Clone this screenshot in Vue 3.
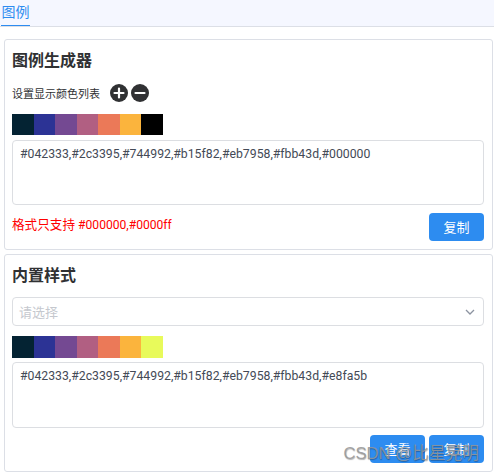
<script setup>
const paletteA = ['#042333', '#2c3395', '#744992', '#b15f82', '#eb7958', '#fbb43d', '#000000']
const paletteB = ['#042333', '#2c3395', '#744992', '#b15f82', '#eb7958', '#fbb43d', '#e8fa5b']
</script>

<template>
  <div class="page">
    <div class="tabs"><div class="tab">图例</div></div>

    <section class="card first">
      <h2 class="title">图例生成器</h2>
      <div class="setting">
        <span class="setting-label">设置显示颜色列表</span>
        <div class="icons">
          <svg class="round" viewBox="0 0 18 18"><circle cx="9" cy="9" r="9" fill="#303133"/><path d="M9 4.5v9M4.5 9h9" stroke="#fff" stroke-width="2.2" stroke-linecap="round"/></svg>
          <svg class="round" viewBox="0 0 18 18"><circle cx="9" cy="9" r="9" fill="#303133"/><path d="M4.5 9h9" stroke="#fff" stroke-width="2.2" stroke-linecap="round"/></svg>
        </div>
      </div>
      <div class="swatches short"><i v-for="c in paletteA" :key="c" :style="{ background: c }"></i></div>
      <div class="area">#042333,#2c3395,#744992,#b15f82,#eb7958,#fbb43d,#000000</div>
      <div class="foot between">
        <span class="hint">格式只支持 <span class="hint-code">#000000,#0000ff</span></span>
        <button class="btn">复制</button>
      </div>
    </section>

    <section class="card second">
      <h2 class="title">内置样式</h2>
      <div class="select">
        <span>请选择</span>
        <svg class="chev" viewBox="0 0 10 6"><path d="M1 1l4 4 4-4" fill="none" stroke="#8c93a0" stroke-width="1.3"/></svg>
      </div>
      <div class="swatches"><i v-for="c in paletteB" :key="c" :style="{ background: c }"></i></div>
      <div class="area tall">#042333,#2c3395,#744992,#b15f82,#eb7958,#fbb43d,#e8fa5b</div>
      <div class="foot end">
        <button class="btn">查看</button>
        <button class="btn">复制</button>
      </div>
    </section>

    <div class="mark">CSDN @比星晃明</div>
  </div>
</template>

<style scoped>
.page {
  position: relative;
  width: 494px;
  height: 472px;
  overflow: hidden;
  background: #fff;
  font-family: Roboto, "Noto Sans CJK SC", sans-serif;
  color: #303133;
}
.tabs {
  height: 26px;
  background: #f5f7ff;
  border-bottom: 1px solid #dcdfe6;
  padding-left: 1px;
}
.tab {
  width: 29px;
  height: 26px;
  line-height: 25px;
  box-sizing: border-box;
  font-size: 14px;
  text-align: center;
  color: #2d8cf0;
  border-bottom: 1px solid #2d8cf0;
}
.card {
  box-sizing: border-box;
  margin-left: 4px;
  width: 489px;
  border: 1px solid #dcdfe6;
  border-radius: 3px;
  padding: 0 8px 0 7px;
}
.first { margin-top: 12px; height: 211px; }
.second { margin-top: 4px; height: 218px; }
.title {
  margin: 0;
  font-size: 16px;
  font-weight: 600;
  line-height: 22px;
  padding-top: 10px;
}
.setting {
  display: flex;
  align-items: center;
  height: 18px;
  margin-top: 12px;
}
.setting-label { font-size: 11px; width: 98px; }
.icons { display: flex; gap: 3px; }
.round { width: 18px; height: 18px; display: block; }
.swatches { display: flex; width: 151px; height: 22px; margin-top: 10px; }
.swatches.short { height: 21px; margin-top: 12px; }
.swatches i { flex: 1; display: block; }
.area {
  box-sizing: border-box;
  height: 65px;
  margin-top: 5px;
  border: 1px solid #dcdee2;
  border-radius: 4px;
  padding: 5px 7px;
  font-size: 12.25px;
  line-height: 17px;
  color: #444a56;
}
.area.tall { height: 66px; margin-top: 4px; }
.foot { display: flex; align-items: center; margin-top: 8px; gap: 4px; }
.between { justify-content: space-between; }
.end { justify-content: flex-end; margin-top: 7px; }
.hint { font-size: 12.6px; color: #f00; position: relative; top: -4px; }
.hint-code { font-size: 12.1px; }
.btn {
  width: 55px;
  height: 28px;
  padding: 0;
  border: 0;
  border-radius: 4px;
  background: #2d8cf0;
  color: #fff;
  font: inherit;
  font-size: 13px;
  line-height: 25px;
}
.select {
  display: flex;
  align-items: center;
  justify-content: space-between;
  box-sizing: border-box;
  height: 29px;
  margin-top: 10px;
  padding: 0 8px 0 6px;
  border: 1px solid #dcdee2;
  border-radius: 4px;
  font-size: 13px;
  color: #c5c8ce;
}
.chev { width: 10px; height: 6px; }
.mark {
  position: absolute;
  right: 15px;
  bottom: 8px;
  font-size: 16.7px;
  font-family: "Liberation Sans", "Noto Sans CJK SC", sans-serif;
  color: rgba(150, 150, 150, 0.85);
  text-shadow: 0.5px 0.5px 1px rgba(0, 0, 0, 0.3);
}
</style>
